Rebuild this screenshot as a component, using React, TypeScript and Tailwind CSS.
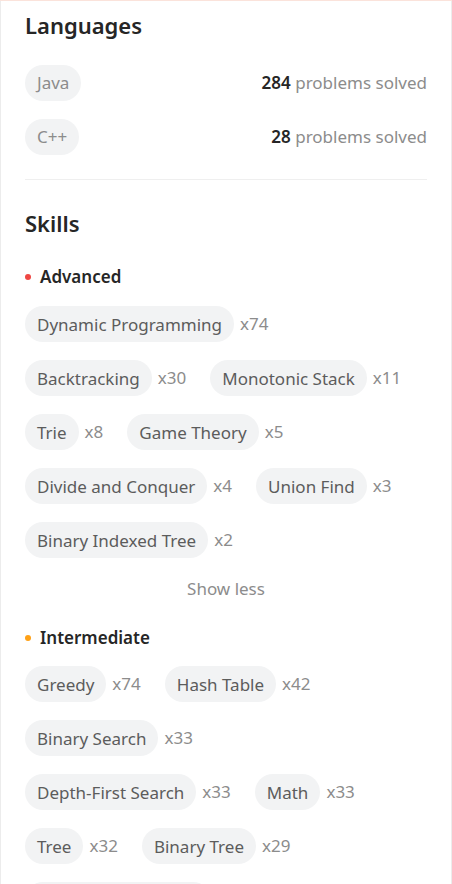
import React from 'react';

type Skill = { name: string; count: number };

const advanced: Skill[] = [
  { name: 'Dynamic Programming', count: 74 },
  { name: 'Backtracking', count: 30 },
  { name: 'Monotonic Stack', count: 11 },
  { name: 'Trie', count: 8 },
  { name: 'Game Theory', count: 5 },
  { name: 'Divide and Conquer', count: 4 },
  { name: 'Union Find', count: 3 },
  { name: 'Binary Indexed Tree', count: 2 },
];

const intermediate: Skill[] = [
  { name: 'Greedy', count: 74 },
  { name: 'Hash Table', count: 42 },
  { name: 'Binary Search', count: 33 },
  { name: 'Depth-First Search', count: 33 },
  { name: 'Math', count: 33 },
  { name: 'Tree', count: 32 },
  { name: 'Binary Tree', count: 29 },
  { name: 'Breadth-First Search', count: 28 },
];

const languages = [
  { name: 'Java', solved: 284 },
  { name: 'C++', solved: 28 },
];

function SkillList({ skills }: { skills: Skill[] }) {
  return (
    <div className="flex flex-wrap gap-y-[18px]">
      {skills.map((s) => (
        <div key={s.name} className="flex items-center mr-6">
          <span className="h-9 px-3 rounded-full bg-[#f2f3f4] text-[#5c5c5c] flex items-center leading-none">
            {s.name}
          </span>
          <span className="ml-[6px] text-[#8c8c8c]">x{s.count}</span>
        </div>
      ))}
    </div>
  );
}

function Level({ color, label }: { color: string; label: string }) {
  return (
    <div className="flex items-center gap-[9px] h-6">
      <span className={`w-[6px] h-[6px] rounded-full ${color}`} />
      <span className="font-semibold text-[#262626]">{label}</span>
    </div>
  );
}

export default function App() {
  return (
    <div
      className="min-h-[884px] bg-white text-[17px]"
      style={{ fontFamily: '"Noto Sans", sans-serif' }}
    >
      <div className="h-px bg-[#fbe3db]" />
      <div className="border-x border-[#ececec] px-6 pt-[10px] pb-6 min-h-[883px]">
        <h2 className="text-[22px] leading-7 font-semibold text-[#262626]">Languages</h2>
        <div className="mt-[26px] flex flex-col gap-[18px]">
          {languages.map((l) => (
            <div key={l.name} className="flex items-center justify-between">
              <span className="h-9 px-3 rounded-full bg-[#f2f3f4] text-[#8c8c8c] flex items-center">
                {l.name}
              </span>
              <span className="text-[#8c8c8c]">
                <span className="font-semibold text-[#262626]">{l.solved}</span> problems solved
              </span>
            </div>
          ))}
        </div>
        <div className="mt-6 h-px bg-[#efefef]" />

        <h2 className="mt-[29px] text-[22px] leading-7 font-semibold text-[#262626]">Skills</h2>
        <div className="mt-[28px]">
          <Level color="bg-[#ef4743]" label="Advanced" />
        </div>
        <div className="mt-[17px]">
          <SkillList skills={advanced} />
        </div>
        <div className="mt-[19px] text-center text-[#8c8c8c] leading-6">Show less</div>
        <div className="mt-[25px]">
          <Level color="bg-[#ffa116]" label="Intermediate" />
        </div>
        <div className="mt-[16px]">
          <SkillList skills={intermediate} />
        </div>
      </div>
    </div>
  );
}
